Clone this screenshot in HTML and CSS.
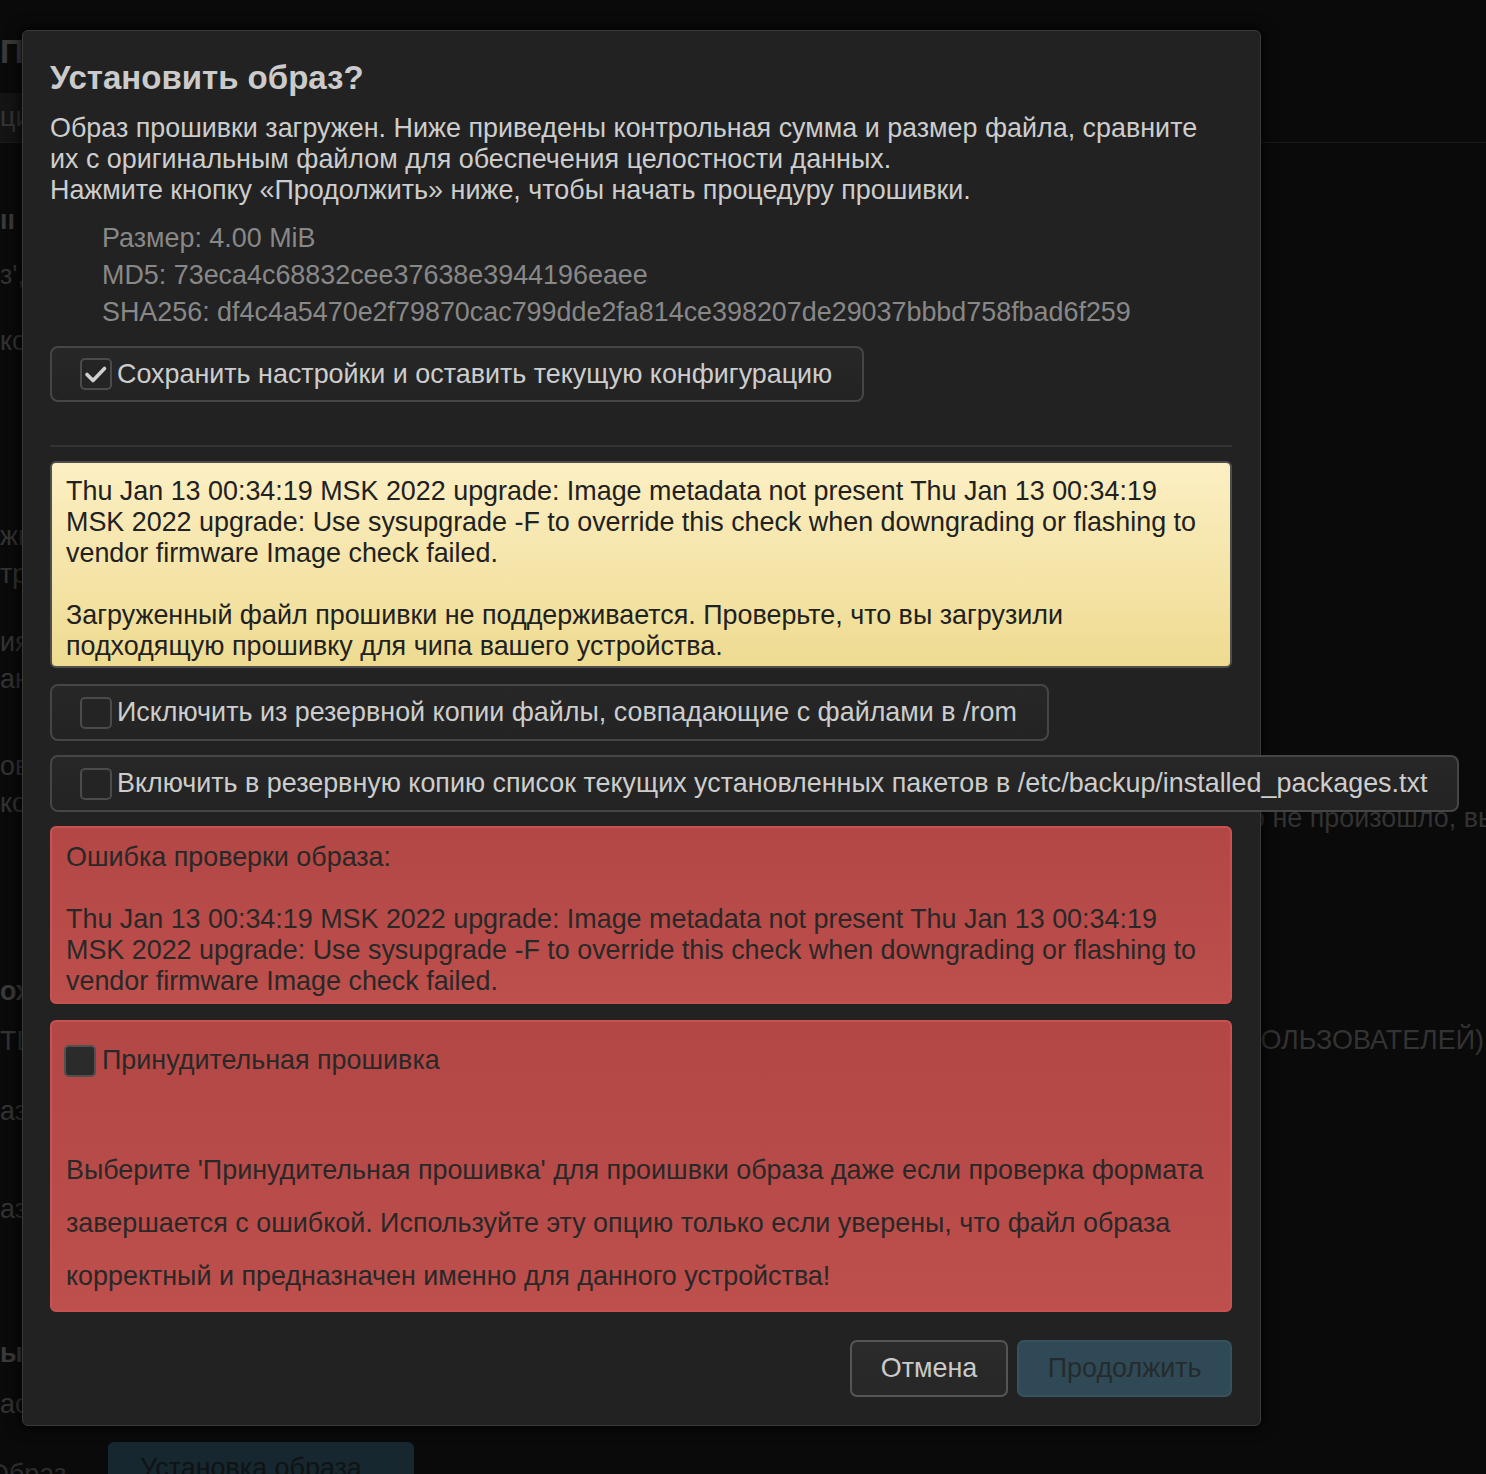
FILE: index.html
```html
<!DOCTYPE html>
<html lang="ru">
<head>
<meta charset="utf-8">
<title>Установить образ?</title>
<link rel="stylesheet" href="styles.css">
</head>
<body>
<div class="backdrop">
  <div class="bg-title">П</div>
  <div class="bg-tabs"><span class="bg-tab">ции</span></div>
  <div class="bg-body">
    <div class="bg-col-left">
      <div class="bg-line bg-bold sp-59">ıı</div>
      <div class="bg-line sp-18">з',</div>
      <div class="bg-line sp-29">ко</div>
      <div class="bg-line sp-158">жм</div>
      <div class="bg-line sp-1">тр</div>
      <div class="bg-line sp-31">ия</div>
      <div class="bg-line">ан</div>
      <div class="bg-line sp-50">ов</div>
      <div class="bg-line">ко</div>
      <div class="bg-line bg-bold sp-151">ох</div>
      <div class="bg-line sp-13">TD</div>
      <div class="bg-line sp-33">аз</div>
      <div class="bg-line sp-61">аз</div>
      <div class="bg-line bg-bold sp-107">ы</div>
      <div class="bg-line sp-14">ас</div>
      <div class="bg-last">
        <span class="bg-label">Образ</span>
        <span class="bg-btn">Установка образа</span>
      </div>
    </div>
    <div class="bg-col-right">
      <div class="bg-line bg-r1">о не произошло, вы</div>
      <div class="bg-line bg-r2"><span>ПОЛЬЗОВАТЕЛЕЙ)</span></div>
    </div>
  </div>
</div>

<div class="modal" role="dialog">
  <h4 class="modal-title">Установить образ?</h4>
  <p class="modal-text">Образ прошивки загружен. Ниже приведены контрольная сумма и размер файла, сравните<br>их с оригинальным файлом для обеспечения целостности данных.<br>Нажмите кнопку «Продолжить» ниже, чтобы начать процедуру прошивки.</p>
  <ul class="meta">
    <li>Размер: 4.00 MiB</li>
    <li>MD5: 73eca4c68832cee37638e3944196eaee</li>
    <li>SHA256: df4c4a5470e2f79870cac799dde2fa814ce398207de29037bbbd758fbad6f259</li>
  </ul>
  <label class="opt opt-first">
    <span class="cb"><svg width="28" height="28" viewBox="0 0 28 28"><polyline points="5,14.5 11,20.5 22.5,8.5" fill="none" stroke="#cfcfcf" stroke-width="3.6" stroke-linecap="round" stroke-linejoin="round"/></svg></span>
    <span>Сохранить настройки и оставить текущую конфигурацию</span>
  </label>
  <hr class="divider">
  <div class="alert alert-warn">
    <div>Thu Jan 13 00:34:19 MSK 2022 upgrade: Image metadata not present Thu Jan 13 00:34:19 MSK 2022 upgrade: Use sysupgrade -F to override this check when downgrading or flashing to vendor firmware Image check failed.</div>
    <div class="alert-gap">Загруженный файл прошивки не поддерживается. Проверьте, что вы загрузили подходящую прошивку для чипа вашего устройства.</div>
  </div>
  <label class="opt opt-second">
    <span class="cb"></span>
    <span>Исключить из резервной копии файлы, совпадающие с файлами в /rom</span>
  </label>
  <label class="opt opt-third">
    <span class="cb"></span>
    <span>Включить в резервную копию список текущих установленных пакетов в /etc/backup/installed_packages.txt</span>
  </label>
  <div class="alert alert-err alert-check">
    <div>Ошибка проверки образа:</div>
    <div class="alert-gap">Thu Jan 13 00:34:19 MSK 2022 upgrade: Image metadata not present Thu Jan 13 00:34:19 MSK 2022 upgrade: Use sysupgrade -F to override this check when downgrading or flashing to vendor firmware Image check failed.</div>
  </div>
  <div class="alert alert-err alert-force">
    <label class="force-row">
      <span class="cb cb-dark"></span>
      <span>Принудительная прошивка</span>
    </label>
    <p class="force-text">Выберите 'Принудительная прошивка' для проишвки образа даже если проверка формата завершается с ошибкой. Используйте эту опцию только если уверены, что файл образа корректный и предназначен именно для данного устройства!</p>
  </div>
  <div class="modal-footer">
    <button class="btn btn-cancel" type="button">Отмена</button>
    <button class="btn btn-primary" type="button">Продолжить</button>
  </div>
</div>
</body>
</html>
```

FILE: styles.css
```css
* { box-sizing: border-box; }

html, body {
  margin: 0;
  padding: 0;
}

body {
  position: relative;
  width: 1486px;
  height: 1474px;
  overflow: hidden;
  background: #0a0a0a;
  font-family: "Liberation Sans", Arial, sans-serif;
  font-size: 26.9px;
  color: #333;
}

/* ---------- dimmed page behind the dialog ---------- */
.backdrop {
  width: 1486px;
  height: 1474px;
  overflow: hidden;
  white-space: nowrap;
}

.bg-title {
  padding-top: 32px;
  height: 93px;
  font-size: 33px;
  line-height: 40px;
  font-weight: bold;
  color: #3a3a3a;
}

.bg-tabs {
  height: 50px;
  border-bottom: 1px solid #1b1b1b;
}

.bg-tab {
  display: inline-block;
  width: 180px;
  height: 49px;
  line-height: 49px;
  background: #141414;
  color: #353535;
}

.bg-body {
  display: grid;
  grid-template-columns: 1250px 1fr;
}

.bg-line {
  height: 37px;
  line-height: 37px;
  color: #333;
}

.bg-bold { font-weight: bold; color: #3a3a3a; }

.sp-1 { margin-top: 1px; }
.sp-13 { margin-top: 13px; }
.sp-14 { margin-top: 14px; }
.sp-18 { margin-top: 18px; }
.sp-29 { margin-top: 29px; }
.sp-31 { margin-top: 31px; }
.sp-33 { margin-top: 33px; }
.sp-50 { margin-top: 50px; }
.sp-59 { margin-top: 59px; }
.sp-61 { margin-top: 61px; }
.sp-107 { margin-top: 107px; }
.sp-151 { margin-top: 151px; }
.sp-158 { margin-top: 158px; }

.bg-last {
  display: grid;
  grid-template-columns: 108px auto;
  align-items: start;
  margin-top: 19px;
}

.bg-label {
  margin-left: -12px;
  padding-top: 14px;
  line-height: 37px;
  color: #2c2c2c;
}

.bg-btn {
  justify-self: start;
  width: 306px;
  height: 57px;
  padding: 8px 0 0 32px;
  line-height: 37px;
  border-radius: 6px;
  background: #16272f;
  color: #0f1314;
}

.bg-col-right { min-width: 0; }

.bg-r1 { margin-top: 657px; }

.bg-r2 {
  display: flex;
  justify-content: flex-end;
  margin-top: 185px;
  padding-right: 2px;
}

.bg-r2 span { flex: none; }

/* ---------- dialog ---------- */
.modal {
  position: absolute;
  left: 22px;
  top: 30px;
  width: 1239px;
  padding: 27px 28px 28px 27px;
  background: #222;
  border: 1px solid #3a3a3a;
  border-radius: 6px;
  box-shadow: 0 0 14px 2px rgba(0, 0, 0, 0.75);
  color: #ccc;
  display: flex;
  flex-direction: column;
}

.modal-title {
  margin: 0 0 15px;
  font-size: 33px;
  line-height: 40px;
  font-weight: bold;
  color: #cbcbcb;
}

.modal-text {
  margin: 0;
  line-height: 31px;
  color: #cdcdcd;
}

.meta {
  margin: 14px 0 0;
  padding: 0 0 0 52px;
  list-style: none;
  line-height: 37px;
  color: #888;
}

.opt {
  display: flex;
  align-items: center;
  width: max-content;
  height: 56px;
  padding: 0 30px 0 28px;
  border: 2px solid #464646;
  border-radius: 8px;
  background: linear-gradient(#272727, #232323);
  color: #cdcdcd;
  line-height: 31px;
  white-space: nowrap;
}

.opt-first { margin-top: 15px; }
.opt-second { margin-top: 16px; height: 57px; }
.opt-third { margin-top: 14px; height: 57px; }

.cb {
  flex: none;
  display: flex;
  align-items: center;
  justify-content: center;
  width: 32px;
  height: 32px;
  margin-right: 5px;
  border: 2px solid #4b4b4b;
  border-radius: 5px;
  background: #242424;
}

.cb-dark {
  background: #2b2b2b;
  border-color: #505050;
  margin-left: -2px;
  margin-right: 6px;
}

.divider {
  width: 100%;
  height: 2px;
  margin: 43px 0 14px;
  border: 0;
  background: #333;
}

.alert {
  border: 2px solid;
  border-radius: 6px;
  padding: 13px 14px 4px;
  line-height: 31px;
}

.alert-gap { margin-top: 31px; }

.alert-warn {
  background: linear-gradient(#fcefc3, #eedb91);
  border-color: #4e4e4c;
  color: #212121;
}

.alert-err {
  background: linear-gradient(#b24745, #bd4f4c);
  border-color: #c8524f;
  color: #282828;
}

.alert-check {
  margin-top: 14px;
  padding-top: 14px;
  padding-bottom: 5px;
}

.alert-force {
  margin-top: 16px;
  padding-top: 12px;
  padding-bottom: 7px;
}

.force-row {
  display: flex;
  align-items: center;
  height: 53px;
}

.force-text {
  margin: 57px 0 0;
  line-height: 53px;
}

.modal-footer {
  display: flex;
  justify-content: flex-end;
  gap: 9px;
  margin-top: 28px;
}

.btn {
  height: 57px;
  border: 2px solid;
  border-radius: 7px;
  font-family: inherit;
  font-size: 26.9px;
  line-height: 31px;
}

.btn-cancel {
  padding: 0 29px;
  background: linear-gradient(#2b2b2b, #272727);
  border-color: #555;
  color: #cacaca;
}

.btn-primary {
  padding: 0 28.5px;
  background: #2f4a56;
  border-color: #35525e;
  color: #252a2c;
}
```
